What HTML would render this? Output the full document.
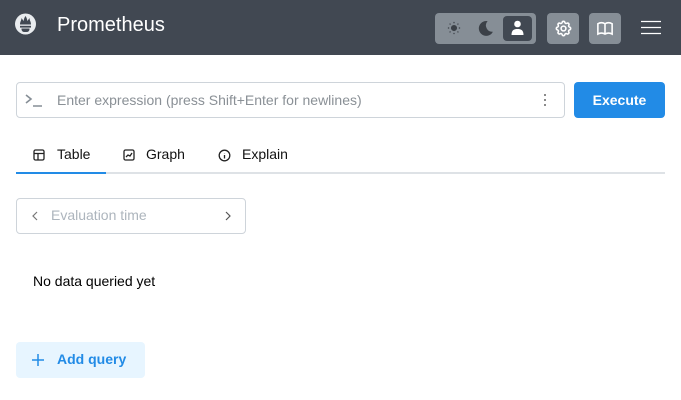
<!DOCTYPE html>
<html><head><style>
*{box-sizing:border-box;margin:0;padding:0}
body{width:681px;height:400px;background:#fff;font-family:"Liberation Sans",sans-serif;position:relative;overflow:hidden}
.hdr{position:absolute;left:0;top:0;width:681px;height:55px;background:#414852}
.abs{position:absolute}
</style></head><body>
<div class="hdr">
  <svg class="abs" style="left:15px;top:13px" width="21" height="22" viewBox="0 0 21 21">
    <circle cx="10.5" cy="10.5" r="10.5" fill="#e9ecef"/>
    <path d="M5 11 C5 8 6.5 7 6.5 4.5 C7.5 6 8 6.5 8.7 7.5 C8.7 5.5 9.8 3.5 10.5 2.5 C11.2 3.5 12.3 5.5 12.3 7.5 C13 6.5 13.5 6 14.5 4.5 C14.5 7 16 8 16 11 Z" fill="#414852"/>
    <rect x="5" y="12.3" width="11" height="1.8" fill="#414852"/>
    <path d="M6.5 15 h8 v1 a3 3 0 0 1 -3 2.5 h-2 a3 3 0 0 1 -3 -2.5z" fill="#414852"/>
  </svg>
  <div class="abs" style="left:57px;top:14px;color:#fff;font-size:20px">Prometheus</div>
  <div class="abs" style="left:435px;top:13px;width:101px;height:31px;background:#868e96;border-radius:4px"></div>
  <svg class="abs" style="left:447px;top:21px" width="14" height="14" viewBox="0 0 16 16" fill="none" stroke="#3b4047" stroke-width="1.4"><circle cx="8" cy="8" r="2.8" fill="#3b4047"/><path d="M8 1v1.5M8 13.5v1.5M1 8h1.5M13.5 8h1.5M3 3l1 1M12 12l1 1M3 13l1-1M12 4l1-1"/></svg>
  <svg class="abs" style="left:477px;top:19px" width="18" height="18" viewBox="0 0 17 17"><path d="M10 2 A7 7 0 1 0 15 12 A6 6 0 0 1 10 2 Z" fill="#3b4047"/></svg>
  <div class="abs" style="left:503px;top:16px;width:29px;height:25px;background:#414852;border-radius:4px"></div>
  <svg class="abs" style="left:510px;top:19px" width="15" height="18" viewBox="0 0 15 18" fill="#fff"><circle cx="7.5" cy="5" r="3.3"/><path d="M1.5 16 C1.5 11 4 10 7.5 10 C11 10 13.5 11 13.5 16 Z"/></svg>
  <div class="abs" style="left:547px;top:13px;width:32px;height:31px;background:#868e96;border-radius:4px"></div>
  <svg class="abs" style="left:554px;top:19px" width="19" height="19" viewBox="0 0 24 24" fill="none" stroke="#fff" stroke-width="2"><circle cx="12" cy="12" r="3"/><path d="M10.3 4.3c.4-1.8 3-1.8 3.4 0a1.7 1.7 0 0 0 2.6 1.1c1.5-.9 3.3.8 2.4 2.4a1.7 1.7 0 0 0 1 2.5c1.8.4 1.8 3 0 3.4a1.7 1.7 0 0 0-1 2.6c.9 1.5-.9 3.3-2.4 2.4a1.7 1.7 0 0 0-2.6 1c-.4 1.8-3 1.8-3.4 0a1.7 1.7 0 0 0-2.6-1c-1.5.9-3.3-.9-2.4-2.4a1.7 1.7 0 0 0-1-2.6c-1.8-.4-1.8-3 0-3.4a1.7 1.7 0 0 0 1-2.5c-.9-1.6.9-3.3 2.4-2.4 1 .6 2.3.1 2.6-1.1z"/></svg>
  <div class="abs" style="left:589px;top:13px;width:32px;height:31px;background:#868e96;border-radius:4px"></div>
  <svg class="abs" style="left:595px;top:19px" width="20" height="19" viewBox="0 0 24 24" fill="none" stroke="#fff" stroke-width="2"><path d="M3 19a9 9 0 0 1 9 0 9 9 0 0 1 9 0V6a9 9 0 0 0-9 0 9 9 0 0 0-9 0zM12 6v13"/></svg>
  <svg class="abs" style="left:641px;top:19px" width="20" height="17" viewBox="0 0 20 17" stroke="#fff" stroke-width="1.3"><path d="M0 2.5h20M0 8.5h20M0 14.5h20"/></svg>
</div>
<div class="abs" style="left:16px;top:82px;width:549px;height:36px;border:1px solid #ced4da;border-radius:4px"></div>
<svg class="abs" style="left:25px;top:92px" width="18" height="16" viewBox="0 0 18 16" fill="none" stroke="#868e96" stroke-width="1.6"><path d="M1 3l5 4-5 4M8 14h9"/></svg>
<div class="abs" style="left:57px;top:92px;font-size:14px;color:#8a9096">Enter expression (press Shift+Enter for newlines)</div>
<svg class="abs" style="left:543px;top:93px" width="4" height="14" viewBox="0 0 4 14" fill="#666"><circle cx="2" cy="2" r="1"/><circle cx="2" cy="7" r="1"/><circle cx="2" cy="12" r="1"/></svg>
<div class="abs" style="left:574px;top:82px;width:91px;height:36px;background:#228be6;border-radius:4px;color:#fff;font-weight:bold;font-size:14px;text-align:center;line-height:36px">Execute</div>
<svg class="abs" style="left:33px;top:149px" width="12" height="12" viewBox="0 0 12 12" fill="none" stroke="#222" stroke-width="1.3"><rect x="1" y="1" width="10" height="10" rx="1.5"/><path d="M1 4.5h10M5 4.5V11"/></svg>
<div class="abs" style="left:57px;top:146px;font-size:14px;color:#111">Table</div>
<svg class="abs" style="left:123px;top:149px" width="12" height="12" viewBox="0 0 12 12" fill="none" stroke="#222" stroke-width="1.3"><rect x="1" y="1" width="10" height="10" rx="1.5"/><path d="M3 8l2-2 2 1 2-3"/></svg>
<div class="abs" style="left:146px;top:146px;font-size:14px;color:#111">Graph</div>
<svg class="abs" style="left:218px;top:149px" width="13" height="13" viewBox="0 0 13 13" fill="none" stroke="#222" stroke-width="1.3"><circle cx="6.5" cy="6.5" r="5.3"/><path d="M6.5 6v3.5M6.5 4v.3"/></svg>
<div class="abs" style="left:242px;top:146px;font-size:14px;color:#111">Explain</div>
<div class="abs" style="left:16px;top:172px;width:649px;height:2px;background:#dee2e6"></div>
<div class="abs" style="left:16px;top:172px;width:90px;height:2px;background:#228be6"></div>
<div class="abs" style="left:16px;top:198px;width:230px;height:36px;border:1px solid #ced4da;border-radius:4px"></div>
<svg class="abs" style="left:32px;top:211px" width="6" height="10" viewBox="0 0 6 10" fill="none" stroke="#777" stroke-width="1.2"><path d="M5 1L1 5l4 4"/></svg>
<div class="abs" style="left:51px;top:207px;font-size:14px;color:#adb5bd">Evaluation time</div>
<svg class="abs" style="left:225px;top:211px" width="6" height="10" viewBox="0 0 6 10" fill="none" stroke="#555" stroke-width="1.2"><path d="M1 1l4 4-4 4"/></svg>
<div class="abs" style="left:33px;top:273px;font-size:14px;color:#000">No data queried yet</div>
<div class="abs" style="left:16px;top:342px;width:129px;height:36px;background:#e7f5ff;border-radius:4px"></div>
<svg class="abs" style="left:31px;top:353px" width="14" height="14" viewBox="0 0 14 14" stroke="#228be6" stroke-width="1.5"><path d="M7 1v12M1 7h12"/></svg>
<div class="abs" style="left:57px;top:351px;font-size:14px;font-weight:bold;color:#228be6">Add query</div>
</body></html>
